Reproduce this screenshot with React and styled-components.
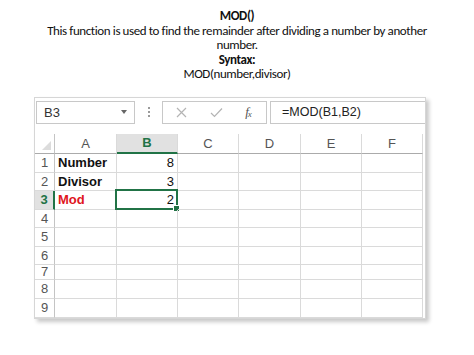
import React from "react";
import styled, { createGlobalStyle } from "styled-components";

const GlobalStyle = createGlobalStyle`
  html, body {
    margin: 0;
    padding: 0;
    background: #fff;
  }
  body {
    font-family: "Carlito", "Lato", sans-serif;
  }
`;

const Page = styled.div`
  width: 474px;
  height: 355px;
  overflow: hidden;
  background: #fff;
`;

const Intro = styled.div`
  padding-top: 9px;
  text-align: center;
  font-size: 13px;
  letter-spacing: -0.4px;
  line-height: 14.5px;
  color: #111;
`;

const Line = styled.div`
  font-weight: ${p => (p.bold ? 700 : 400)};
`;

const Window = styled.div`
  margin: 15px 0 0 34px;
  width: 390px;
  border: 1px solid #d6d6d6;
  background: #fff;
  box-shadow: 3px 3px 4px rgba(0, 0, 0, 0.22);
  font-family: "Liberation Sans", Arial, sans-serif;
`;

const Toolbar = styled.div`
  height: 36px;
  display: flex;
  align-items: flex-start;
  padding-top: 3px;
  box-sizing: border-box;
`;

const NameBox = styled.div`
  margin-left: 1px;
  width: 99px;
  height: 23px;
  box-sizing: border-box;
  border: 1px solid #c8c8c8;
  display: flex;
  align-items: center;
  justify-content: space-between;
  padding: 0 7px 0 7px;
  font-size: 13px;
  color: #333;
`;

const Caret = styled.span`
  width: 0;
  height: 0;
  border-left: 3.5px solid transparent;
  border-right: 3.5px solid transparent;
  border-top: 4px solid #666;
`;

const Dots = styled.div`
  width: 27px;
  height: 23px;
  display: flex;
  flex-direction: column;
  align-items: center;
  justify-content: center;
  gap: 2px;
  span {
    width: 2px;
    height: 2px;
    background: #9a9a9a;
  }
`;

const ButtonBox = styled.div`
  width: 105px;
  height: 23px;
  box-sizing: border-box;
  border: 1px solid #c8c8c8;
  display: flex;
  align-items: center;
  justify-content: space-around;
  padding: 0 4px 0 2px;
`;

const Fx = styled.span`
  font-family: "Liberation Serif", serif;
  font-style: italic;
  font-size: 13px;
  color: #555;
  letter-spacing: -1px;
  sub {
    font-size: 9px;
    vertical-align: -1px;
  }
`;

const FormulaBox = styled.div`
  margin-left: 3px;
  flex: 1;
  height: 23px;
  box-sizing: border-box;
  border: 1px solid #c8c8c8;
  border-right: none;
  display: flex;
  align-items: center;
  padding-left: 11px;
  font-size: 12.5px;
  color: #222;
`;

const Sheet = styled.div`
  display: grid;
  grid-template-columns: 20px 62px 61px 61px 62px 61px 61px;
  grid-template-rows: 20px 19px 18px 19px 18px 19px 18px 15px 19px 19px;
`;

const Cell = styled.div`
  position: relative;
  box-sizing: border-box;
  border-right: 1px solid #dadada;
  border-bottom: 1px solid #dadada;
  display: flex;
  align-items: center;
  justify-content: ${p => (p.right ? "flex-end" : "flex-start")};
  padding: 0 3px;
  font-size: 13px;
  font-weight: ${p => (p.bold ? 700 : 400)};
  color: ${p => p.color || "#111"};
`;

const ColHead = styled(Cell)`
  justify-content: center;
  font-size: 13px;
  font-weight: ${p => (p.active ? 700 : 400)};
  color: ${p => (p.active ? "#217346" : "#555")};
  background: ${p => (p.active ? "#e1e1e1" : "#fff")};
  border-bottom: ${p => (p.active ? "2px solid #217346" : "1px solid #ababab")};
  border-right: 1px solid #dadada;
`;

const Corner = styled(Cell)`
  border-bottom: 1px solid #ababab;
  border-right: 1px solid #c4c4c4;
  &::after {
    content: "";
    position: absolute;
    right: 3px;
    bottom: 3px;
    width: 0;
    height: 0;
    border-left: 9px solid transparent;
    border-bottom: 9px solid #dcdcdc;
  }
`;

const RowHead = styled(Cell)`
  justify-content: center;
  padding: 0;
  font-size: 13px;
  font-weight: ${p => (p.active ? 700 : 400)};
  color: ${p => (p.active ? "#217346" : "#555")};
  background: ${p => (p.active ? "#e1e1e1" : "#fff")};
  border-right: ${p => (p.active ? "2px solid #217346" : "1px solid #c4c4c4")};
`;

const Selected = styled.div`
  position: absolute;
  left: -2px;
  top: -2px;
  right: -1px;
  bottom: -1px;
  border: 2px solid #217346;
  pointer-events: none;
  &::after {
    content: "";
    position: absolute;
    right: -4px;
    bottom: -4px;
    width: 5px;
    height: 5px;
    background: #217346;
    border: 1px solid #fff;
  }
`;

const cols = ["A", "B", "C", "D", "E", "F"];

const data = {
  1: [{ text: "Number", bold: true }, { text: "8", right: true }],
  2: [{ text: "Divisor", bold: true }, { text: "3", right: true }],
  3: [{ text: "Mod", bold: true, color: "#e0161d" }, { text: "2", right: true, selected: true }],
};

function XIcon() {
  return (
    <svg width="11" height="11" viewBox="0 0 11 11">
      <path d="M1 1L10 10M10 1L1 10" stroke="#b4b4b4" strokeWidth="1.2" fill="none" />
    </svg>
  );
}

function CheckIcon() {
  return (
    <svg width="13" height="11" viewBox="0 0 13 11">
      <path d="M1 6L4.5 9.5L12 1.5" stroke="#b4b4b4" strokeWidth="1.2" fill="none" />
    </svg>
  );
}

export default function App() {
  const rows = [1, 2, 3, 4, 5, 6, 7, 8, 9];
  return (
    <Page>
      <GlobalStyle />
      <Intro>
        <Line bold>MOD()</Line>
        <Line>This function is used to find the remainder after dividing a number by another</Line>
        <Line>number.</Line>
        <Line bold>Syntax:</Line>
        <Line>MOD(number,divisor)</Line>
      </Intro>
      <Window>
        <Toolbar>
          <NameBox>
            B3
            <Caret />
          </NameBox>
          <Dots>
            <span />
            <span />
            <span />
          </Dots>
          <ButtonBox>
            <XIcon />
            <CheckIcon />
            <Fx>
              f<sub>x</sub>
            </Fx>
          </ButtonBox>
          <FormulaBox>=MOD(B1,B2)</FormulaBox>
        </Toolbar>
        <Sheet>
          <Corner />
          {cols.map(c => (
            <ColHead key={c} active={c === "B"}>
              {c}
            </ColHead>
          ))}
          {rows.map(r => (
            <React.Fragment key={r}>
              <RowHead active={r === 3}>{r}</RowHead>
              {cols.map((c, i) => {
                const d = (data[r] || [])[i] || {};
                return (
                  <Cell key={c} bold={d.bold} right={d.right} color={d.color}>
                    {d.text}
                    {d.selected && <Selected />}
                  </Cell>
                );
              })}
            </React.Fragment>
          ))}
        </Sheet>
      </Window>
    </Page>
  );
}
